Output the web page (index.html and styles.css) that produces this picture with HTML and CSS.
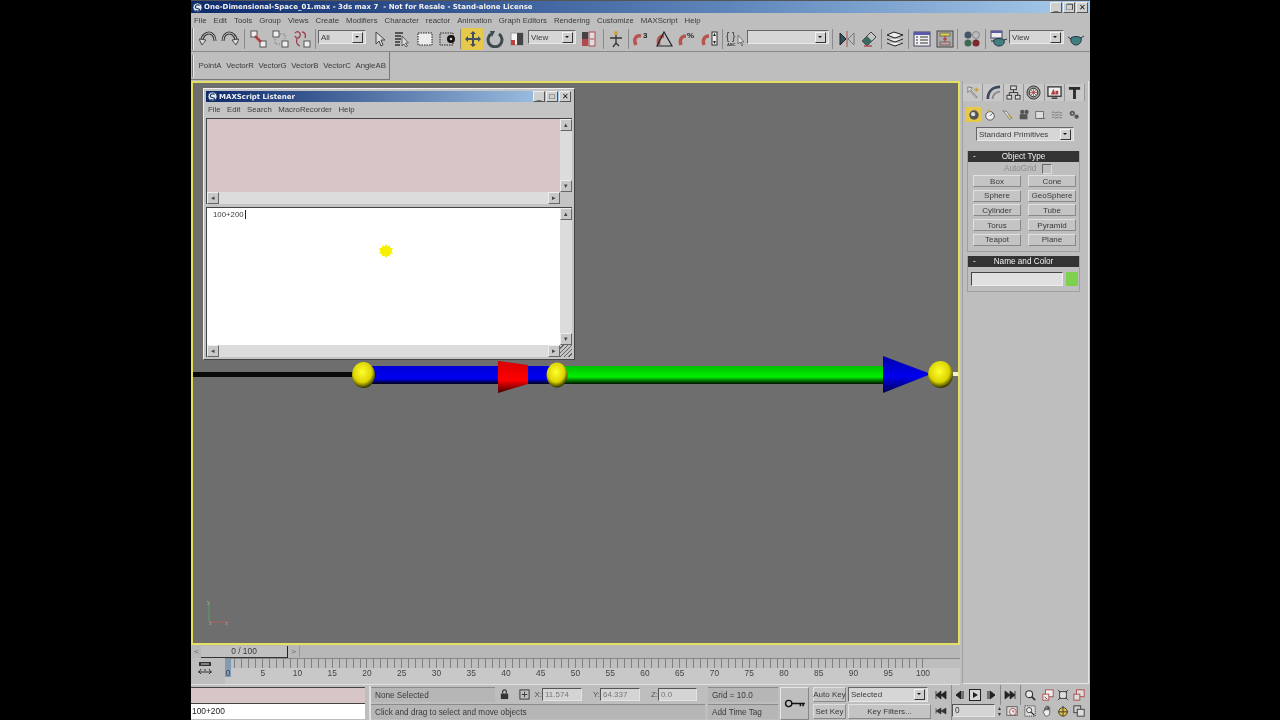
FILE: index.html
```html
<!DOCTYPE html>
<html lang="en">
<head>
    <meta charset="UTF-8">
    <title>One-Dimensional-Space_01.max - 3ds max 7</title>
    <link rel="stylesheet" href="styles.css">
</head>
<body>
<div class="app">
    <!-- Title bar -->
    <div class="titlebar">
        <svg class="app-logo" viewBox="0 0 12 12"><circle cx="6" cy="6" r="5" fill="#dfe8f4" stroke="#16305f"/><path d="M8.5 3.6C6 2.4 3.6 3.6 3.6 5.6s4.8 1 4.8 3c0 1.4-2.6 1.6-4.6.8" fill="none" stroke="#16305f" stroke-width="1.2"/></svg>
        <span class="title-text">One-Dimensional-Space_01.max - 3ds max 7 &nbsp;- Not for Resale - Stand-alone License</span>
        <div class="win-buttons">
            <span class="win-btn">_</span><span class="win-btn">&#10064;</span><span class="win-btn">&#10005;</span>
        </div>
    </div>

    <!-- Menu bar -->
    <div class="menubar">
        <span>File</span><span>Edit</span><span>Tools</span><span>Group</span><span>Views</span><span>Create</span><span>Modifiers</span><span>Character</span><span>reactor</span><span>Animation</span><span>Graph Editors</span><span>Rendering</span><span>Customize</span><span>MAXScript</span><span>Help</span>
    </div>

    <!-- Main toolbar -->
    <div class="toolbar">
        <span class="handle"></span>
        <span class="tool w22"><svg viewBox="0 0 18 18"><path d="M3 13C2 6 7 3 10 3s6 3 6 8" fill="none" stroke="#333" stroke-width="3"/><path d="M3 13C2 6 7 3 10 3s6 3 6 8" fill="none" stroke="#ddd" stroke-width="1"/><path d="M0 9l3 6 4-5z" fill="#ddd" stroke="#333" stroke-width=".8"/></svg></span>
        <span class="tool w22"><svg viewBox="0 0 18 18"><path d="M15 13C16 6 11 3 8 3s-6 3-6 8" fill="none" stroke="#333" stroke-width="3"/><path d="M15 13C16 6 11 3 8 3s-6 3-6 8" fill="none" stroke="#ddd" stroke-width="1"/><path d="M18 9l-3 6-4-5z" fill="#ddd" stroke="#333" stroke-width=".8"/></svg></span>
        <span class="sep w6"></span>
        <span class="tool w22"><svg viewBox="0 0 18 18"><rect x="2" y="1" width="6" height="6" fill="#eee" stroke="#555"/><rect x="11" y="11" width="6" height="6" fill="#eee" stroke="#555"/><path d="M6 6l6 6" stroke="#b04040" stroke-width="2.5"/></svg></span>
        <span class="tool w22"><svg viewBox="0 0 18 18"><rect x="2" y="1" width="6" height="6" fill="#eee" stroke="#555"/><rect x="11" y="11" width="6" height="6" fill="#eee" stroke="#555"/><path d="M9 4h5v5" fill="none" stroke="#777" stroke-dasharray="1.5 1.5"/><path d="M4 9v5h5" fill="none" stroke="#777" stroke-dasharray="1.5 1.5"/></svg></span>
        <span class="tool w22"><svg viewBox="0 0 18 18"><rect x="11" y="11" width="6" height="6" fill="#eee" stroke="#555"/><path d="M2 3c3-3 6 0 5 3S3 9 2 6M9 2c3 0 4 3 3 6M4 9c-1 3 0 6 3 7" fill="none" stroke="#a03a4a" stroke-width="1.3"/></svg></span>
        <span class="sep w5"></span>
        <span class="dropdown w48"><span class="drop-text">All</span><span class="drop-arrow"></span></span>
        <span class="gap1"></span>
        <span class="tool w23"><svg viewBox="0 0 18 18"><path d="M6 2v12l3-3 2 5 2-1-2-5h4z" fill="#ddd" stroke="#444"/></svg></span>
        <span class="tool w23"><svg viewBox="0 0 18 18"><path d="M2 3h8M2 6h6M2 9h6M2 12h5M2 15h5" stroke="#333" stroke-width="1.4"/><path d="M9 6v10l2-2 2 3 1.5-1-2-3h3z" fill="#ddd" stroke="#444" stroke-width=".8"/></svg></span>
        <span class="tool w23"><svg viewBox="0 0 18 18"><rect x="2" y="3" width="14" height="12" fill="#ececec" stroke="#222" stroke-dasharray="1.5 1"/></svg></span>
        <span class="tool w23"><svg viewBox="0 0 18 18"><rect x="1" y="3" width="13" height="12" fill="none" stroke="#222" stroke-dasharray="1.5 1"/><circle cx="12" cy="9" r="4" fill="#111"/><circle cx="12" cy="9" r="1.3" fill="#ccc"/></svg></span>
        <span class="sep w3"></span>
        <span class="tool w21 active"><svg viewBox="0 0 18 18"><path d="M9 1l3 3h-2v4h4V6l3 3-3 3v-2h-4v4h2l-3 3-3-3h2v-4H4v2L1 9l3-3v2h4V4H6z" fill="#3f4f5c"/></svg></span>
        <span class="tool w23"><svg viewBox="0 0 18 18"><path d="M5 4a7 7 0 1 0 8 0" fill="none" stroke="#3c4a4e" stroke-width="3"/><path d="M9 1L4 1l2 6z" fill="#3c4a4e"/></svg></span>
        <span class="tool w22"><svg viewBox="0 0 18 18"><rect x="3" y="3" width="12" height="12" fill="#f4f4f4" stroke="#999"/><rect x="9" y="3" width="6" height="12" fill="#444"/><rect x="3" y="10" width="4" height="5" fill="#c04040"/></svg></span>
        <span class="dropdown w48"><span class="drop-text">View</span><span class="drop-arrow"></span></span>
        <span class="tool w24"><svg viewBox="0 0 18 18"><rect x="3" y="2" width="6" height="14" fill="#444"/><rect x="3" y="9" width="6" height="7" fill="#b04a50"/><rect x="10" y="2" width="6" height="14" fill="#ddd" stroke="#b04a50"/><path d="M11 9h4" stroke="#b04a50"/></svg></span>
        <span class="sep w6"></span>
        <span class="tool w20"><svg viewBox="0 0 18 18"><circle cx="9" cy="3" r="2" fill="#c9a23a"/><path d="M3 8h12M9 5v8l-3 4M9 13l3 3" fill="none" stroke="#333" stroke-width="1.3"/></svg></span>
        <span class="sep w5"></span>
        <span class="tool w21"><svg viewBox="0 0 18 18"><path d="M3 15C0 9 3 5 8 6" fill="none" stroke="#b85450" stroke-width="3.5"/><text x="10" y="8" class="snap-num">3</text></svg></span>
        <span class="tool w23"><svg viewBox="0 0 18 18"><path d="M4 15C2 9 5 6 9 6" fill="none" stroke="#b85450" stroke-width="3.5"/><path d="M9 2L2 16h15z" fill="none" stroke="#222" stroke-width="1.2"/></svg></span>
        <span class="tool w24"><svg viewBox="0 0 18 18"><path d="M3 15C1 9 4 6 8 6" fill="none" stroke="#b85450" stroke-width="3.5"/><text x="9" y="8" class="snap-num">%</text></svg></span>
        <span class="tool w22"><svg viewBox="0 0 18 18"><path d="M3 15C1 9 4 6 8 6" fill="none" stroke="#b85450" stroke-width="3.5"/><rect x="11" y="2" width="5" height="13" fill="#eee" stroke="#333"/><path d="M13.5 3l-1.5 3h3zM13.5 14l-1.5-3h3z" fill="#222"/></svg></span>
        <span class="sep w3"></span>
        <span class="tool w22"><svg viewBox="0 0 18 18"><text x="0" y="10" class="brace">{ }</text><text x="1" y="16" class="abc">ABC</text><path d="M12 5v9l2-2 2 4 1-1-2-3h3z" fill="#ddd" stroke="#555" stroke-width=".7"/></svg></span>
        <span class="gap1"></span>
        <span class="dropdown w82"><span class="drop-text"></span><span class="drop-arrow"></span></span>
        <span class="sep w6"></span>
        <span class="tool w23"><svg viewBox="0 0 18 18"><path d="M2 3l6 6-6 6z" fill="#2f5560" stroke="#222"/><path d="M16 3l-6 6 6 6z" fill="none" stroke="#777"/><path d="M9 1v16" stroke="#a55"/></svg></span>
        <span class="tool w22"><svg viewBox="0 0 18 18"><path d="M2 11l9-9 5 5-9 9z" fill="#c5c5c5" stroke="#444"/><path d="M2 11l5-5 5 5-5 5z" fill="#3c6a62"/><path d="M4 16h8" stroke="#b04a50" stroke-width="1.5"/></svg></span>
        <span class="sep w3"></span>
        <span class="tool w24"><svg viewBox="0 0 18 18"><path d="M1 5l7-3 9 3-8 3zM1 9l8 3 8-3M1 13l8 3 8-3" fill="#eee" stroke="#222"/></svg></span>
        <span class="sep w3"></span>
        <span class="tool w23"><svg viewBox="0 0 18 18"><rect x="1" y="2" width="16" height="14" fill="#f0f0f0" stroke="#446"/><rect x="1" y="2" width="16" height="3" fill="#5a5aa8"/><path d="M3 7h2M3 10h2M3 13h2M7 7h8M7 10h8M7 13h8" stroke="#333"/></svg></span>
        <span class="tool w23"><svg viewBox="0 0 18 18"><rect x="1" y="1" width="16" height="16" fill="#aaa" stroke="#444"/><rect x="4" y="3" width="10" height="3" fill="#e0d050" stroke="#444" stroke-width=".6"/><rect x="4" y="12" width="10" height="3" fill="#c8a0a0" stroke="#444" stroke-width=".6"/><path d="M9 6v6M7 9h4" stroke="#a33"/></svg></span>
        <span class="sep w3"></span>
        <span class="tool w25"><svg viewBox="0 0 18 18"><circle cx="5" cy="5" r="3.5" fill="#456"/><circle cx="13" cy="5" r="3.5" fill="#bbb" stroke="#555" stroke-width=".5"/><circle cx="5" cy="13" r="3.5" fill="#3d6a50"/><circle cx="13" cy="13" r="3.5" fill="#7a2a2a"/></svg></span>
        <span class="sep w2"></span>
        <span class="tool w23"><svg viewBox="0 0 18 18"><rect x="2" y="1" width="11" height="7" fill="#eee" stroke="#446"/><rect x="2" y="1" width="11" height="2" fill="#5a5aa8"/><path d="M2 11h3M15 10l3-1M5 10c2-2 8-2 10 0 1 3-1 6-5 6s-6-3-5-6z" fill="#3f7f80" stroke="#234"/></svg></span>
        <span class="dropdown w55"><span class="drop-text">View</span><span class="drop-arrow"></span></span>
        <span class="gap1"></span>
        <span class="tool w22"><svg viewBox="0 0 18 18"><path d="M1 7l3 2M14 8l3-2M4 8c2-2 8-2 10 0 1 3-1 7-5 7s-6-4-5-7z" fill="#3f7f80" stroke="#234"/></svg></span>
    </div>

    <!-- Custom toolbar -->
    <div class="custombar">
        <div class="custom-panel">
            <span class="handle"></span>
            <span>PointA</span><span>VectorR</span><span>VectorG</span><span>VectorB</span><span>VectorC</span><span>AngleAB</span>
        </div>
    </div>

    <div class="workspace">
        <div class="left-col">
            <!-- Viewport: the scene and the floating listener -->
            <div class="viewport">
                <svg class="scene" viewBox="193 83 765 560">
                    <defs>
                        <linearGradient id="blueBar" x1="0" y1="0" x2="0" y2="1"><stop offset="0" stop-color="#0000d8"/><stop offset=".7" stop-color="#0000f0"/><stop offset=".88" stop-color="#000070"/><stop offset="1" stop-color="#000010"/></linearGradient>
                        <linearGradient id="greenBar" x1="0" y1="0" x2="0" y2="1"><stop offset="0" stop-color="#00c000"/><stop offset=".6" stop-color="#00f000"/><stop offset=".85" stop-color="#006000"/><stop offset="1" stop-color="#001000"/></linearGradient>
                        <linearGradient id="redCone" x1="0" y1="0" x2="0" y2="1"><stop offset="0" stop-color="#d80000"/><stop offset=".6" stop-color="#ff0000"/><stop offset="1" stop-color="#400000"/></linearGradient>
                        <linearGradient id="blueCone" x1="0" y1="0" x2="0" y2="1"><stop offset="0" stop-color="#0000a8"/><stop offset=".55" stop-color="#0000f0"/><stop offset="1" stop-color="#000050"/></linearGradient>
                        <radialGradient id="ball" cx=".45" cy=".38" r=".62"><stop offset="0" stop-color="#ffff30"/><stop offset=".65" stop-color="#dcd400"/><stop offset="1" stop-color="#303000"/></radialGradient>
                    </defs>
                    <rect x="193" y="372" width="165" height="5" fill="#0a0a0a"/>
                    <rect x="370" y="366" width="130" height="18" fill="url(#blueBar)"/>
                    <rect x="526" y="366" width="24" height="18" fill="url(#blueBar)"/>
                    <path d="M498 361l30 4v19l-30 9z" fill="url(#redCone)"/>
                    <rect x="564" y="366" width="320" height="18" fill="url(#greenBar)"/>
                    <path d="M883 356l48 18-48 19z" fill="url(#blueCone)"/>
                    <rect x="950" y="372" width="8" height="4" fill="#f0f0e0"/>
                    <ellipse cx="363.5" cy="375" rx="11.5" ry="13" fill="url(#ball)"/>
                    <ellipse cx="557" cy="375" rx="10.5" ry="12.5" fill="url(#ball)"/>
                    <ellipse cx="940.5" cy="374.5" rx="12.5" ry="13.5" fill="url(#ball)"/>
                    <path d="M209 622v-20" stroke="#5e9a62"/>
                    <path d="M209 622h20" stroke="#a86060"/>
                    <text x="225" y="625" class="axis-label">x</text>
                    <text x="207" y="604" class="axis-label">y</text>
                    <text x="209" y="625" class="axis-label">z</text>
                </svg>

                <div class="listener">
                    <div class="listener-title">
                        <svg class="app-logo" viewBox="0 0 12 12"><circle cx="6" cy="6" r="5" fill="#dfe8f4" stroke="#16305f"/><path d="M8.5 3.6C6 2.4 3.6 3.6 3.6 5.6s4.8 1 4.8 3c0 1.4-2.6 1.6-4.6.8" fill="none" stroke="#16305f" stroke-width="1.2"/></svg>
                        <span class="title-text">MAXScript Listener</span>
                        <div class="win-buttons">
                            <span class="win-btn">_</span><span class="win-btn">&#9633;</span><span class="win-btn">&#10005;</span>
                        </div>
                    </div>
                    <div class="listener-menu">
                        <span>File</span><span>Edit</span><span>Search</span><span>MacroRecorder</span><span>Help</span>
                    </div>
                    <div class="pane pane-output">
                        <div class="pane-body">
                            <div class="pane-text pink"></div>
                            <div class="vscroll"><span class="sb-btn">&#9652;</span><span class="sb-btn">&#9662;</span></div>
                        </div>
                        <div class="hscroll"><span class="sb-btn">&#9666;</span><span class="sb-btn">&#9656;</span><span class="sb-corner"></span></div>
                    </div>
                    <div class="pane pane-input">
                        <div class="pane-body">
                            <div class="pane-text white"><span class="typed">100+200</span></div>
                            <div class="vscroll"><span class="sb-btn">&#9652;</span><span class="sb-btn">&#9662;</span></div>
                        </div>
                        <div class="hscroll"><span class="sb-btn">&#9666;</span><span class="sb-btn">&#9656;</span><span class="sb-corner grip"></span></div>
                    </div>
                </div>

                <svg class="cursor-halo" viewBox="0 0 14 14"><path d="M7 0l1.6 2.4L11 1.2l.2 2.6 2.8.4-1.4 2.8L14 9.4l-2.8.4-.2 2.8-2.4-1.2L7 14l-1.6-2.6L3 12.600l-.2-2.8L0 9.4l1.4-2.4L0 4.2l2.8-.4L3 1.2l2.4 1.2z" fill="#f6f000"/></svg>
            </div>

            <!-- Time slider -->
            <div class="timeslider">
                <span class="slide-arrow">&lt;</span>
                <span class="slide-thumb">0 / 100</span>
                <span class="slide-arrow next">&gt;</span>
            </div>

            <!-- Track bar -->
            <div class="trackbar">
                <span class="track-icon"><svg viewBox="0 0 16 14"><rect x="2" y="1" width="12" height="4" fill="#333"/><path d="M4 3h8" stroke="#ccc"/><path d="M1 11h14M4 8l-2 3 2 2M12 8l2 3-2 2M8 8v2" fill="none" stroke="#333"/></svg></span>
                <div class="ruler">
                    <div class="ticks"><span class="frame-marker"></span></div>
                    <div class="frames">
                        <span>0</span><span>5</span><span>10</span><span>15</span><span>20</span><span>25</span><span>30</span>
                        <span>35</span><span>40</span><span>45</span><span>50</span><span>55</span><span>60</span><span>65</span>
                        <span>70</span><span>75</span><span>80</span><span>85</span><span>90</span><span>95</span><span>100</span>
                    </div>
                </div>
            </div>
        </div>

        <!-- Command panel -->
        <div class="command-panel">
            <div class="panel-tabs">
                <span class="tab"><svg viewBox="0 0 16 16"><path d="M3 2l5 1-2 2 7 8-1 1-7-8-2 2z" fill="#ddd" stroke="#555" stroke-width=".7"/><path d="M12 2l1 2 2 1-2 1-1 2-1-2-2-1 2-1z" fill="#c9a23a"/></svg></span>
                <span class="tab"><svg viewBox="0 0 16 16"><path d="M2 15C2 7 7 2 15 2" fill="none" stroke="#3d4a5a" stroke-width="3"/><path d="M7 15c0-4 3-8 8-8" fill="none" stroke="#888" stroke-width="2"/></svg></span>
                <span class="tab"><svg viewBox="0 0 16 16"><rect x="5" y="1" width="6" height="4" fill="#ddd" stroke="#333"/><rect x="1" y="11" width="5" height="4" fill="#ddd" stroke="#333"/><rect x="10" y="11" width="5" height="4" fill="#ddd" stroke="#333"/><path d="M8 5v3M3.5 11V8h9v3" fill="none" stroke="#333"/></svg></span>
                <span class="tab"><svg viewBox="0 0 16 16"><circle cx="8" cy="8" r="7" fill="#999" stroke="#333"/><circle cx="8" cy="8" r="4.5" fill="#ddd" stroke="#333"/><path d="M8 4v8M4 8h8M5 5l6 6M11 5l-6 6" stroke="#a44" stroke-width=".8"/></svg></span>
                <span class="tab"><svg viewBox="0 0 16 16"><rect x="1" y="2" width="14" height="10" fill="#eee" stroke="#333" stroke-width="1.4"/><path d="M4 10l3-6 2 6zM9 6h3v4H9z" fill="#b04040"/><path d="M5 14h6" stroke="#333" stroke-width="1.5"/></svg></span>
                <span class="tab"><svg viewBox="0 0 16 16"><path d="M2 2h12v3H9.5v10h-3V5H2z" fill="#2c2c2c"/></svg></span>
            </div>
            <div class="panel-icons">
                <span class="sub-icon active"><svg viewBox="0 0 14 14"><circle cx="7" cy="7" r="5.5" fill="#555"/><circle cx="6" cy="6" r="2.5" fill="#ddd"/></svg></span>
                <span class="sub-icon"><svg viewBox="0 0 14 14"><circle cx="7" cy="8" r="5" fill="#eee" stroke="#444"/><path d="M7 8l3-3" stroke="#444"/><path d="M3 1l5 1-2 2z" fill="#c9a23a"/></svg></span>
                <span class="sub-icon"><svg viewBox="0 0 14 14"><path d="M2 2l5 1 5 8-2 1-5-7z" fill="#ddd" stroke="#555" stroke-width=".7"/><path d="M9 7l4 4" stroke="#b9a030" stroke-width="2"/></svg></span>
                <span class="sub-icon"><svg viewBox="0 0 14 14"><circle cx="5" cy="3.5" r="2.5" fill="#555"/><circle cx="10" cy="3.5" r="2.5" fill="#555"/><rect x="2" y="6" width="9" height="6" fill="#555"/></svg></span>
                <span class="sub-icon"><svg viewBox="0 0 14 14"><rect x="2" y="3" width="9" height="8" fill="#ddd" stroke="#666"/><path d="M6 11h7" stroke="#666"/></svg></span>
                <span class="sub-icon"><svg viewBox="0 0 14 14"><path d="M1 4c2-2 4 2 6 0s4 2 6 0M1 7c2-2 4 2 6 0s4 2 6 0M1 10c2-2 4 2 6 0s4 2 6 0" fill="none" stroke="#777"/></svg></span>
                <span class="sub-icon"><svg viewBox="0 0 14 14"><circle cx="5" cy="5" r="3" fill="#555"/><circle cx="10" cy="9" r="2.5" fill="#555"/><circle cx="5" cy="5" r="1" fill="#ccc"/></svg></span>
            </div>
            <div class="panel-drop">
                <span class="dropdown w98"><span class="drop-text">Standard Primitives</span><span class="drop-arrow"></span></span>
            </div>

            <div class="rollout">
                <div class="rollout-head"><span class="minus">-</span>Object Type</div>
                <div class="autogrid"><span>AutoGrid</span><span class="checkbox"></span></div>
                <div class="btn-grid">
                    <span class="btn">Box</span><span class="btn">Cone</span>
                    <span class="btn">Sphere</span><span class="btn">GeoSphere</span>
                    <span class="btn">Cylinder</span><span class="btn">Tube</span>
                    <span class="btn">Torus</span><span class="btn">Pyramid</span>
                    <span class="btn">Teapot</span><span class="btn">Plane</span>
                </div>
            </div>
            <div class="rollout">
                <div class="rollout-head"><span class="minus">-</span>Name and Color</div>
                <div class="name-row"><span class="name-input"></span><span class="swatch"></span></div>
            </div>
        </div>
    </div>

    <!-- Status row -->
    <div class="status">
        <div class="mini-listener">
            <div class="mini-pink"></div>
            <div class="mini-white">100+200</div>
        </div>
        <div class="prompts">
            <div class="prompt-row">
                <span class="field-flat none-sel">None Selected</span>
                <span class="tool w18"><svg viewBox="0 0 12 12"><rect x="2" y="5" width="8" height="6" fill="#333"/><path d="M4 5V3a2 2 0 0 1 4 0v2" fill="none" stroke="#333" stroke-width="1.3"/></svg></span>
                <span class="gap1"></span>
                <span class="tool w20"><svg viewBox="0 0 12 12"><rect x="1" y="1" width="10" height="10" fill="none" stroke="#333"/><path d="M6 3v6M3 6h6" stroke="#333"/></svg></span>
                <span class="coord-label w8">X:</span><span class="coord-field w40">11.574</span>
                <span class="coord-label w18">Y:</span><span class="coord-field w40">64.337</span>
                <span class="coord-label w18">Z:</span><span class="coord-field w39">0.0</span>
                <span class="grid-gap"></span>
                <span class="field-flat grid-val">Grid = 10.0</span>
            </div>
            <div class="prompt-row second">
                <span class="field-flat hint">Click and drag to select and move objects</span>
                <span class="field-flat grid-val">Add Time Tag</span>
            </div>
        </div>
        <span class="key-btn"><svg viewBox="0 0 24 10"><circle cx="5" cy="5" r="3.5" fill="none" stroke="#111" stroke-width="1.5"/><path d="M8 5h15M18 5v3M21 5v3" stroke="#111" stroke-width="1.7"/></svg></span>
        <div class="key-col">
            <span class="btn key-small">Auto Key</span>
            <span class="btn key-small">Set Key</span>
        </div>
        <div class="filter-col">
            <span class="dropdown w80"><span class="drop-text">Selected</span><span class="drop-arrow"></span></span>
            <span class="btn key-filter">Key Filters...</span>
        </div>
        <div class="playback">
            <div class="play-row">
                <span class="tool w18"><svg viewBox="0 0 12 10"><path d="M1 1v8M11 1L6 5l5 4zM6 1L1 5l5 4z" fill="#222" stroke="#222" stroke-width=".8"/></svg></span>
                <span class="sep w2"></span>
                <span class="tool w16"><svg viewBox="0 0 12 10"><path d="M7 1L2 5l5 4zM9 1v8" fill="#222" stroke="#222"/></svg></span>
                <span class="tool w14 play"><svg viewBox="0 0 12 12"><rect x=".5" y=".5" width="11" height="11" fill="#d8d8d8" stroke="#222"/><path d="M4 3l5 3-5 3z" fill="#222"/></svg></span>
                <span class="tool w17"><svg viewBox="0 0 12 10"><path d="M5 1l5 4-5 4zM3 1v8" fill="#222" stroke="#222"/></svg></span>
                <span class="sep w2"></span>
                <span class="tool w18"><svg viewBox="0 0 12 10"><path d="M11 1v8M1 1l5 4-5 4zM6 1l5 4-5 4z" fill="#222" stroke="#222" stroke-width=".8"/></svg></span>
                <span class="sep w2"></span>
                <span class="tool w18"><svg viewBox="0 0 14 14"><circle cx="6" cy="6" r="4" fill="#e8e8e8" stroke="#333" stroke-width="1.3"/><path d="M9 9l4 4" stroke="#333" stroke-width="2"/></svg></span>
                <span class="tool w17"><svg viewBox="0 0 14 14"><rect x="4" y="1" width="9" height="8" fill="#eee" stroke="#a44"/><rect x="1" y="6" width="7" height="7" fill="#eee" stroke="#a44"/><path d="M3 9l3 3" stroke="#333"/></svg></span>
                <span class="tool w14"><svg viewBox="0 0 14 14"><path d="M3 3h8v8H3z" fill="#ddd" stroke="#333"/><path d="M1 1l3 3M13 1l-3 3M1 13l3-3M13 13l-3-3" stroke="#333"/></svg></span>
                <span class="tool w17"><svg viewBox="0 0 14 14"><rect x="4" y="1" width="9" height="8" fill="#ddd" stroke="#a44"/><rect x="1" y="6" width="7" height="7" fill="#ddd" stroke="#a44"/></svg></span>
            </div>
            <div class="play-row">
                <span class="tool w18"><svg viewBox="0 0 12 10"><path d="M1 2v6M11 2L6 5l5 3zM6 2L1 5l5 3z" fill="#333" stroke="#333" stroke-width=".6"/></svg></span>
                <span class="sep w2"></span>
                <span class="frame-field">0</span>
                <span class="spinner"><span>&#9652;</span><span>&#9662;</span></span>
                <span class="tool w18"><svg viewBox="0 0 14 14"><rect x="1" y="2" width="12" height="10" fill="#ddd" stroke="#555"/><circle cx="8" cy="8" r="4" fill="#eee" stroke="#a44"/><path d="M8 6v2h2" fill="none" stroke="#a44"/></svg></span>
                <span class="tool w18"><svg viewBox="0 0 14 14"><rect x="1" y="1" width="12" height="12" fill="#ddd" stroke="#333" stroke-dasharray="1.5 1"/><circle cx="6" cy="6" r="3" fill="#eee" stroke="#333"/><path d="M8 8l4 4" stroke="#333" stroke-width="1.5"/></svg></span>
                <span class="tool w17"><svg viewBox="0 0 14 14"><path d="M3 7V4c0-1 1.5-1 1.5 0v2V2c0-1 1.5-1 1.5 0v4V2c0-1 1.5-1 1.5 0v4V3c0-1 1.5-1 1.5 0v6c0 3-2 4-4 4S4 12 1 8c0-1 1-1 2-1z" fill="#eee" stroke="#333" stroke-width=".8"/></svg></span>
                <span class="tool w14"><svg viewBox="0 0 14 14"><circle cx="7" cy="8" r="5" fill="#e0c040" stroke="#333"/><path d="M7 1v12M1 8h12" stroke="#333"/></svg></span>
                <span class="tool w17"><svg viewBox="0 0 14 14"><rect x="1" y="1" width="8" height="8" fill="#ccc" stroke="#333"/><rect x="5" y="5" width="8" height="8" fill="#ddd" stroke="#333"/></svg></span>
            </div>
        </div>
    </div>
</div>
</body>
</html>
```

FILE: styles.css
```css
/* Page: letterboxed application on black */
body {
    margin: 0;
    background-color: #000;
    font-family: "Liberation Sans", Arial, sans-serif;
    font-size: 8px;
    color: #3a3a3a;
}

.app {
    width: 899px;
    height: 720px;
    margin-left: 191px;
    background-color: #bebebe;
    overflow: hidden;
    filter: blur(0.5px);
}

svg {
    display: block;
}

/* Title bars */
.titlebar {
    display: flex;
    align-items: center;
    height: 12px;
    padding: 0 2px 0 1px;
    border-top: 1px solid #555;
    background: linear-gradient(to right, #0d2a6c, #5f86bb 60%, #a8ccec);
}

.app-logo {
    width: 11px;
    height: 11px;
    margin-right: 1px;
    flex-shrink: 0;
}

.title-text {
    color: #f2f2f2;
    font-family: "DejaVu Sans", sans-serif;
    font-weight: bold;
    font-size: 7px;
    white-space: nowrap;
}

.win-buttons {
    display: flex;
    gap: 1px;
    margin-left: auto;
}

.win-btn {
    width: 10px;
    height: 9px;
    background-color: #cfcfcf;
    border: 1px solid;
    border-color: #eee #555 #555 #eee;
    font-size: 8px;
    line-height: 9px;
    text-align: center;
    color: #111;
}

/* Menu */
.menubar {
    display: flex;
    align-items: center;
    gap: 7px;
    height: 14px;
    padding-left: 3px;
    font-size: 7.8px;
}

/* Toolbars */
.toolbar {
    display: flex;
    align-items: center;
    height: 25px;
    border-bottom: 1px solid #8a8a8a;
    box-sizing: border-box;
}

.handle {
    width: 2px;
    height: 22px;
    margin: 0 3px 0 1px;
    border-left: 1px solid #777;
    border-right: 1px solid #eee;
    box-sizing: border-box;
    flex-shrink: 0;
}

.tool {
    display: flex;
    align-items: center;
    justify-content: center;
    height: 22px;
    flex-shrink: 0;
}

.toolbar .tool svg {
    width: 18px;
    height: 18px;
}

.tool.active {
    background-color: #e6c84a;
}

.sep {
    display: flex;
    justify-content: center;
    height: 20px;
    flex-shrink: 0;
}

.sep::after {
    content: "";
    width: 1px;
    background-color: #8a8a8a;
}

.gap1 {
    width: 1px;
    flex-shrink: 0;
}

/* Width helpers for the tightly packed icon rows */
.w2 { width: 2px; }
.w3 { width: 3px; }
.w5 { width: 5px; }
.w6 { width: 6px; }
.w8 { width: 8px; }
.w14 { width: 14px; }
.w16 { width: 16px; }
.w17 { width: 17px; }
.w18 { width: 18px; }
.w20 { width: 20px; }
.w21 { width: 21px; }
.w22 { width: 22px; }
.w23 { width: 23px; }
.w24 { width: 24px; }
.w25 { width: 25px; }
.w39 { width: 39px; }
.w40 { width: 40px; }
.w48 { width: 48px; }
.w55 { width: 55px; }
.w80 { width: 80px; }
.w82 { width: 82px; }
.w98 { width: 98px; }

.dropdown {
    display: flex;
    align-items: center;
    justify-content: space-between;
    height: 14px;
    box-sizing: border-box;
    padding: 0 2px;
    background-color: #d6d6d6;
    border: 1px solid;
    border-color: #666 #e8e8e8 #e8e8e8 #666;
    flex-shrink: 0;
    align-self: flex-start;
    margin-top: 3px;
}

.drop-text {
    white-space: nowrap;
}

.drop-arrow {
    position: relative;
    width: 9px;
    height: 9px;
    background-color: #d0d0d0;
    border: 1px solid;
    border-color: #f2f2f2 #333 #333 #f2f2f2;
}

.drop-arrow::after {
    content: "";
    position: absolute;
    left: 2px;
    top: 3px;
    border: 2.5px solid transparent;
    border-top-color: #111;
    border-bottom: 0;
}

.snap-num {
    font-family: "Liberation Sans", sans-serif;
    font-weight: bold;
    font-size: 8px;
    fill: #222;
}

.brace {
    font-family: "Liberation Sans", sans-serif;
    font-size: 10px;
    fill: #333;
}

.abc {
    font-family: "Liberation Sans", sans-serif;
    font-size: 4px;
    font-weight: bold;
    fill: #333;
}

.custombar {
    height: 29px;
}

.custom-panel {
    display: flex;
    align-items: center;
    gap: 4.6px;
    width: 199px;
    height: 28px;
    box-sizing: border-box;
    border-right: 1px solid #777;
    border-bottom: 1px solid #777;
    font-size: 7.8px;
    white-space: nowrap;
}

.custom-panel .handle {
    margin-right: 0;
}

/* Workspace: viewport column beside the command panel */
.workspace {
    display: flex;
    height: 604px;
}

.left-col {
    width: 769px;
    flex-shrink: 0;
}

.viewport {
    position: relative;
    height: 564px;
    box-sizing: border-box;
    border: 2px solid #e6e060;
    background-color: #6e6e6e;
}

.scene {
    position: absolute;
    left: 0;
    top: 0;
    width: 765px;
    height: 560px;
}

.axis-label {
    font-family: "Liberation Sans", sans-serif;
    font-size: 6px;
    fill: #b0a0a0;
}

.cursor-halo {
    position: absolute;
    left: 186px;
    top: 161px;
    width: 14px;
    height: 14px;
}

/* Floating MAXScript Listener */
.listener {
    position: absolute;
    left: 10px;
    top: 5px;
    width: 372px;
    height: 272px;
    box-sizing: border-box;
    padding: 2px;
    background-color: #c4c4c4;
    border: 1px solid;
    border-color: #eee #444 #444 #eee;
    display: flex;
    flex-direction: column;
}

.listener-title {
    display: flex;
    align-items: center;
    height: 11px;
    flex-shrink: 0;
    padding: 0 1px;
    background: linear-gradient(to right, #0d2a6c, #a8ccec);
}

.listener-menu {
    display: flex;
    align-items: center;
    gap: 6.5px;
    height: 16px;
    box-sizing: border-box;
    padding: 0 0 2px 2px;
    flex-shrink: 0;
    font-size: 7.8px;
}

.pane {
    display: flex;
    flex-direction: column;
    border-top: 1px solid #444;
    border-left: 1px solid #444;
}

.pane-output {
    height: 85px;
    margin-bottom: 3px;
}

.pane-input {
    flex: 1;
}

.pane-body {
    display: flex;
    flex: 1;
    min-height: 0;
}

.pane-text {
    flex: 1;
}

.pink {
    background-color: #d8c5c5;
}

.white {
    background-color: #fff;
    padding: 2px 6px;
}

.typed {
    font-size: 7.8px;
    padding-right: 1px;
    border-right: 1px solid #222;
}

.vscroll {
    display: flex;
    flex-direction: column;
    justify-content: space-between;
    width: 12px;
    background-color: #dcdcdc;
}

.hscroll {
    display: flex;
    height: 12px;
    background-color: #dcdcdc;
}

.hscroll .sb-btn:nth-child(2) {
    margin-left: auto;
}

.sb-btn {
    width: 10px;
    height: 10px;
    background-color: #c8c8c8;
    border: 1px solid;
    border-color: #eee #666 #666 #eee;
    font-size: 7px;
    line-height: 10px;
    text-align: center;
    color: #444;
}

.sb-corner {
    width: 12px;
    background-color: #c4c4c4;
}

.grip {
    background: repeating-linear-gradient(135deg, #c4c4c4 0 2px, #666 2px 3px);
}

/* Command panel */
.command-panel {
    width: 127px;
    margin-left: 2px;
    height: 603px;
    box-sizing: border-box;
    border-left: 1px solid #a0a0a0;
    border-right: 1px solid #e6e6e6;
    border-bottom: 1px solid #e6e6e6;
}

.panel-tabs {
    display: flex;
    padding: 3px 1px 0 0;
    height: 21px;
    box-sizing: border-box;
}

.tab {
    display: flex;
    align-items: center;
    justify-content: center;
    width: 20.4px;
    height: 17px;
    background-color: #c8c8c8;
    border-right: 1px solid #999;
    box-sizing: border-box;
}

.tab svg {
    width: 15px;
    height: 15px;
}

.panel-icons {
    display: flex;
    gap: 1.5px;
    padding: 5px 0 0 3px;
    height: 18px;
}

.sub-icon {
    display: flex;
    align-items: center;
    justify-content: center;
    width: 15.2px;
    height: 15px;
}

.sub-icon svg {
    width: 12px;
    height: 12px;
}

.sub-icon.active {
    background-color: #e6c84a;
}

.panel-drop {
    padding: 2px 0 0 13px;
    height: 26px;
    box-sizing: border-box;
}

.panel-drop .dropdown {
    margin-top: 0;
}

.rollout {
    margin: 0 8px 4px 4px;
    padding-bottom: 5px;
    border: 1px solid #a0a0a0;
    border-top: 0;
}

.rollout-head {
    position: relative;
    height: 11px;
    background-color: #333;
    color: #f0f0f0;
    font-size: 8.2px;
    line-height: 11px;
    text-align: center;
}

.minus {
    position: absolute;
    left: 5px;
}

.autogrid {
    display: flex;
    align-items: center;
    gap: 6px;
    height: 13px;
    padding-left: 36px;
    color: #8a8a8a;
    font-size: 8.2px;
}

.checkbox {
    width: 8px;
    height: 8px;
    border: 1px solid;
    border-color: #666 #ddd #ddd #666;
}

.btn-grid {
    display: grid;
    grid-template-columns: 48px 48px;
    grid-auto-rows: 12px;
    column-gap: 7px;
    row-gap: 2.7px;
    padding-left: 5px;
}

.btn {
    display: flex;
    align-items: center;
    justify-content: center;
    box-sizing: border-box;
    background-color: #c4c4c4;
    border: 1px solid;
    border-color: #e0e0e0 #888 #888 #e0e0e0;
    font-size: 8px;
    white-space: nowrap;
}

.name-row {
    display: flex;
    gap: 3px;
    padding: 5px 0 0 3px;
}

.name-input {
    width: 92px;
    height: 14px;
    box-sizing: border-box;
    background-color: #e0e0e0;
    border: 1px solid;
    border-color: #444 #eee #eee #444;
}

.swatch {
    width: 12px;
    height: 14px;
    background-color: #80d050;
}

/* Time slider */
.timeslider {
    display: flex;
    align-items: center;
    height: 13px;
    margin-left: 1px;
    background-color: #b8b8b8;
    font-size: 8.4px;
}

.slide-arrow {
    width: 9px;
    height: 11px;
    line-height: 11px;
    text-align: center;
    color: #666;
    font-size: 8px;
}

.slide-arrow.next {
    width: 11px;
    border-right: 1px solid #999;
}

.slide-thumb {
    width: 87px;
    height: 12px;
    box-sizing: border-box;
    border-right: 1px solid #222;
    border-bottom: 1px solid #333;
    background-color: #c0c0c0;
    line-height: 11px;
    text-align: center;
}

/* Track bar */
.trackbar {
    display: flex;
    height: 26px;
    border-bottom: 1px solid #e0e0e0;
}

.track-icon {
    display: flex;
    justify-content: center;
    width: 34px;
    padding-top: 3px;
    padding-right: 6px;
    box-sizing: border-box;
    flex-shrink: 0;
}

.track-icon svg {
    width: 16px;
    height: 14px;
}

.ruler {
    flex: 1;
    background-color: #c8c8c8;
    overflow: hidden;
}

.ticks {
    position: relative;
    height: 9px;
    border-top: 1px solid #888;
    background-color: #bebebe;
    background-image: repeating-linear-gradient(to right, transparent 0, transparent 2.5px, #808080 2.5px, #808080 3.5px, transparent 3.5px, transparent 6.95px);
    background-size: 699px 100%;
    background-repeat: no-repeat;
}

.frame-marker {
    position: absolute;
    left: 0;
    top: 0;
    width: 6px;
    height: 18px;
    background-color: #7f9cb4;
}

.frames {
    display: flex;
    position: relative;
    margin-left: -14.4px;
    font-size: 8.4px;
    color: #444;
}

.frames span {
    flex: 0 0 34.75px;
    text-align: center;
}

/* Status row */
.status {
    display: flex;
    height: 35px;
    padding-top: 1px;
}

.mini-listener {
    width: 174px;
    padding-top: 1px;
    flex-shrink: 0;
}

.mini-pink {
    height: 15px;
    background-color: #d8c5c5;
    border-top: 1px solid #444;
}

.mini-white {
    height: 15px;
    padding-left: 1px;
    background-color: #fff;
    border-top: 1px solid #444;
    font-size: 8.4px;
    line-height: 15px;
    color: #222;
}

.prompts {
    width: 407px;
    margin-left: 6px;
    box-shadow: -2px 0 0 #e2e2e2;
    flex-shrink: 0;
}

.prompt-row {
    display: flex;
    align-items: center;
    height: 17px;
}

.prompt-row.second {
    justify-content: space-between;
}

.field-flat {
    display: flex;
    align-items: center;
    box-sizing: border-box;
    height: 15px;
    padding-left: 4px;
    background-color: #b6b6b6;
    border-top: 1px solid #8a8a8a;
    font-size: 8.2px;
    flex-shrink: 0;
}

.none-sel {
    width: 124px;
}

.hint {
    width: 334px;
}

.grid-val {
    width: 70px;
    padding-left: 4px;
}

.grid-gap {
    width: 11px;
}

.prompt-row .tool svg {
    width: 11px;
    height: 11px;
}

.coord-label {
    color: #555;
    text-align: right;
    flex-shrink: 0;
}

.coord-field {
    height: 13px;
    box-sizing: border-box;
    padding-left: 2px;
    background-color: #d4d4d4;
    border: 1px solid;
    border-color: #555 #e4e4e4 #e4e4e4 #555;
    color: #777;
    line-height: 11px;
    flex-shrink: 0;
}

.key-btn {
    display: flex;
    align-items: center;
    justify-content: center;
    width: 29px;
    height: 33px;
    margin: 1px 4px 0 2px;
    box-sizing: border-box;
    border: 1px solid;
    border-color: #e4e4e4 #888 #888 #e4e4e4;
    flex-shrink: 0;
}

.key-btn svg {
    width: 22px;
    height: 9px;
}

.key-col {
    display: flex;
    flex-direction: column;
    gap: 2px;
    width: 33px;
    padding-top: 1px;
    flex-shrink: 0;
}

.key-small {
    height: 15px;
}

.filter-col {
    display: flex;
    flex-direction: column;
    gap: 2px;
    width: 83px;
    margin-left: 2px;
    padding-top: 1px;
    flex-shrink: 0;
}

.filter-col .dropdown {
    margin-top: 0;
    height: 15px;
}

.key-filter {
    height: 15px;
}

.playback {
    display: flex;
    flex-direction: column;
    gap: 1px;
    margin-left: 1px;
    padding-top: 1px;
}

.play-row {
    display: flex;
    align-items: center;
    height: 15px;
}

.play-row .tool {
    height: 15px;
}

.play-row .tool svg {
    width: 12px;
    height: 12px;
}

.frame-field {
    width: 43px;
    height: 13px;
    box-sizing: border-box;
    padding-left: 2px;
    background-color: #d4d4d4;
    border: 1px solid;
    border-color: #555 #e4e4e4 #e4e4e4 #555;
    line-height: 11px;
    font-size: 8.2px;
}

.spinner {
    display: flex;
    flex-direction: column;
    width: 8px;
    font-size: 6px;
    line-height: 6px;
    text-align: center;
}
```
